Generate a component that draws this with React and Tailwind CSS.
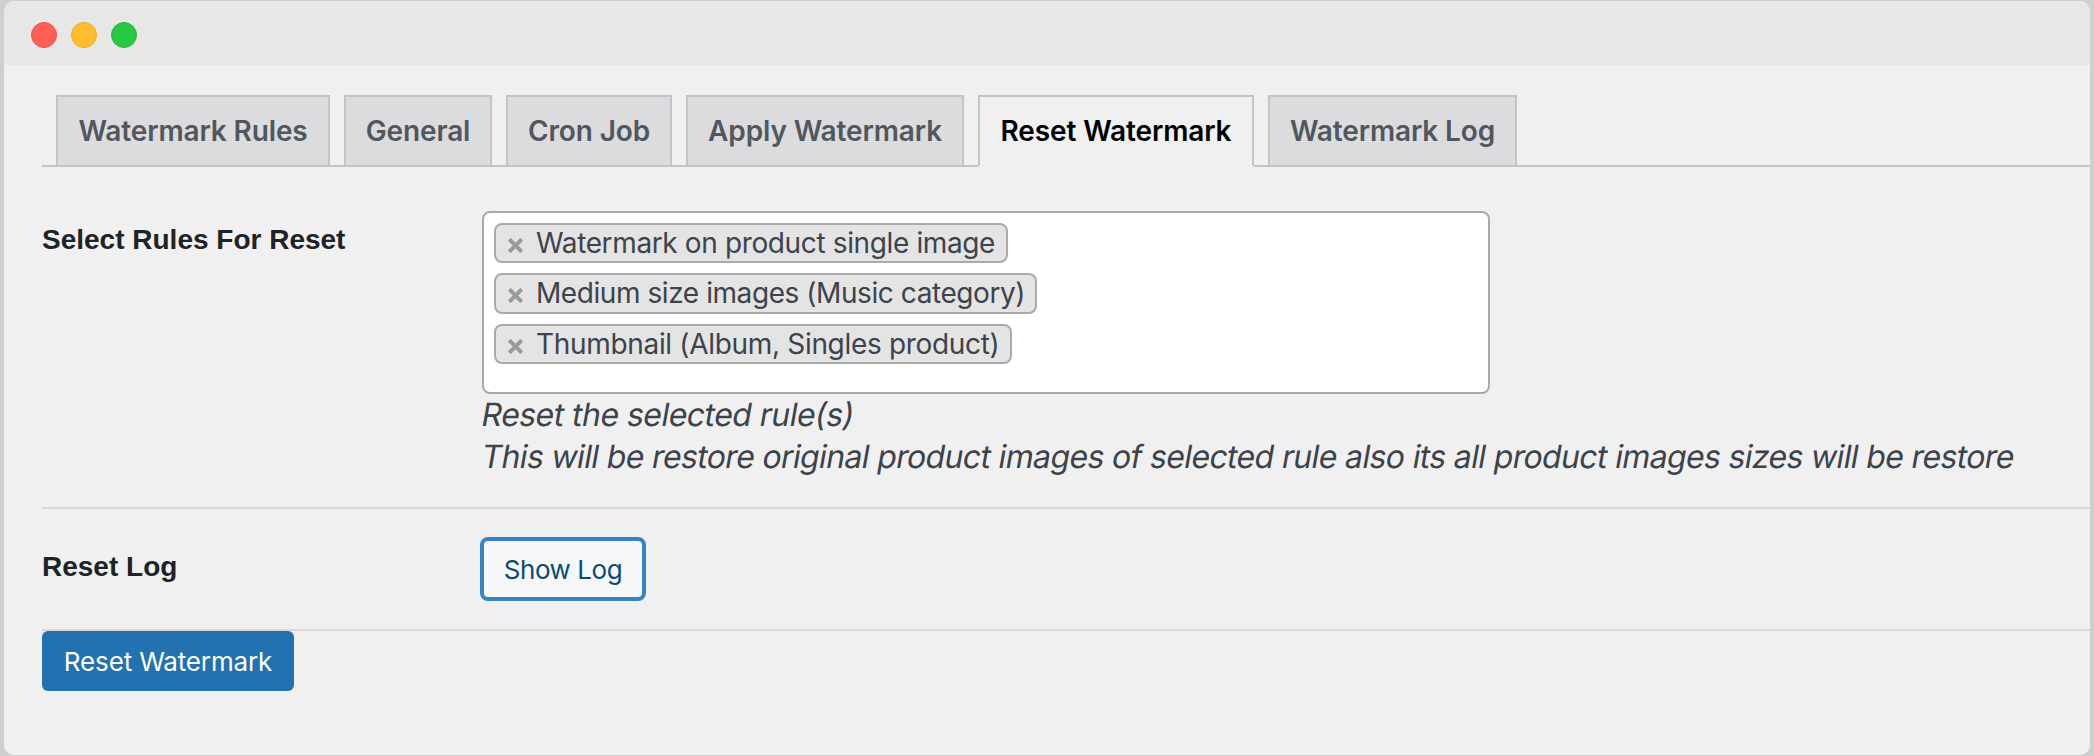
import { useState } from 'react';
import clsx from 'clsx';

const tabs = [
  { id: 'rules', label: 'Watermark Rules', width: 'w-[274px]' },
  { id: 'general', label: 'General', width: 'w-[148px]' },
  { id: 'cron', label: 'Cron Job', width: 'w-[166px]' },
  { id: 'apply', label: 'Apply Watermark', width: 'w-[278px]' },
  { id: 'reset', label: 'Reset Watermark', width: 'w-[276px]' },
  { id: 'log', label: 'Watermark Log', width: 'w-[249px]' },
];

const initialRules = [
  { id: 1, name: 'Watermark on product single image', className: 'h-10 w-[514px] tracking-[-0.37px]' },
  { id: 2, name: 'Medium size images (Music category)', className: 'h-[41px] w-[543px] pb-px tracking-[-0.43px]' },
  { id: 3, name: 'Thumbnail (Album, Singles product)', className: 'h-10 w-[518px] tracking-[-0.32px]' },
];

const TitleBar = () => (
  <div className="flex h-16 items-center gap-[14px] bg-[#e7e7e7] pl-[27px] pt-1">
    <span className="size-[26px] rounded-full border border-[#e9524a] bg-[#ff5f57]" />
    <span className="size-[26px] rounded-full border border-[#f1ae1b] bg-[#febc2e]" />
    <span className="size-[26px] rounded-full border border-[#24b539] bg-[#28c840]" />
  </div>
);

const Tab = ({ tab, active, onClick }) => (
  <button
    type="button"
    onClick={onClick}
    className={clsx(
      'h-[72px] shrink-0 whitespace-nowrap border-2 border-[#c3c4c7] text-[28px] font-semibold tracking-[-0.13px]',
      tab.width,
      active ? 'border-b-[#f0f0f0] bg-[#f0f0f0] text-black' : 'bg-[#dcdcde] text-[#50575e]'
    )}
  >
    {tab.label}
  </button>
);

const RuleChip = ({ rule, onRemove }) => (
  <li
    className={clsx(
      'flex items-center rounded-lg border-2 border-[#aaaaaa] bg-[#e4e4e4] pl-3',
      rule.className
    )}
  >
    <button type="button" onClick={onRemove} aria-label="Remove" className="mr-[13px] mt-1 shrink-0">
      <svg width="15" height="15" viewBox="0 0 15 15" stroke="#999999" strokeWidth="4">
        <path d="M1.3 1.3 13.7 13.7M13.7 1.3 1.3 13.7" />
      </svg>
    </button>
    <span className="whitespace-nowrap text-[28px] leading-9 text-[#3c434a]">{rule.name}</span>
  </li>
);

const App = () => {
  const [activeTab, setActiveTab] = useState('reset');
  const [rules, setRules] = useState(initialRules);

  return (
    <div className="h-[756px] w-[2094px] overflow-hidden bg-[#cfcfcf] px-1 py-px font-['Inter',sans-serif]">
      <div className="h-[754px] overflow-hidden rounded-[10px] bg-[#f0f0f0]">
        <TitleBar />

        <div className="pl-[38px] pt-[30px]">
          {/* Tabs */}
          <nav className="flex h-[72px] gap-[14px] border-b-2 border-[#c3c4c7] pl-[14px]">
            {tabs.map((tab) => (
              <Tab
                key={tab.id}
                tab={tab}
                active={tab.id === activeTab}
                onClick={() => setActiveTab(tab.id)}
              />
            ))}
          </nav>

          {/* Rules */}
          <div className="flex h-[342px] border-b-2 border-[#e2d5d6]">
            <div className="w-[440px] shrink-0 pt-[55px] font-['Liberation_Sans',sans-serif] text-[28px] font-bold leading-9 text-[#1d2327]">
              Select Rules For Reset
            </div>
            <div className="pt-11">
              <ul className="flex h-[183px] w-[1008px] flex-col gap-[10px] rounded-lg border-2 border-[#aaaaaa] bg-white pl-[10px] pt-[10px]">
                {rules.map((rule) => (
                  <RuleChip
                    key={rule.id}
                    rule={rule}
                    onRemove={() => setRules(rules.filter((r) => r.id !== rule.id))}
                  />
                ))}
              </ul>
              {/* Slanted upright face, keeps the two-storey "a" */}
              <div className="flex flex-col items-start whitespace-nowrap text-[32px] leading-[42px] text-[#3c434a]">
                <p className="-skew-x-[10deg] tracking-[-0.54px]">Reset the selected rule(s)</p>
                <p className="-skew-x-[10deg] tracking-[-0.645px]">
                  This will be restore original product images of selected rule also its all product images sizes will be restore
                </p>
              </div>
            </div>
          </div>

          {/* Log */}
          <div className="flex h-[122px] border-b-2 border-[#e2d5d6]">
            <div className="w-[438px] shrink-0 pt-10 font-['Liberation_Sans',sans-serif] text-[28px] font-bold leading-9 text-[#1d2327]">
              Reset Log
            </div>
            <button
              type="button"
              className="mt-7 h-16 w-[166px] rounded-lg border-4 border-[#3582c4] bg-[#f6f7f7] text-[26px] tracking-[-0.45px] text-[#0a4b78]"
            >
              Show Log
            </button>
          </div>

          <button
            type="button"
            className="h-[60px] w-[252px] rounded-md bg-[#2271b1] text-[26px] tracking-[-0.15px] text-white"
          >
            Reset Watermark
          </button>
        </div>
      </div>
    </div>
  );
};

export default App;
